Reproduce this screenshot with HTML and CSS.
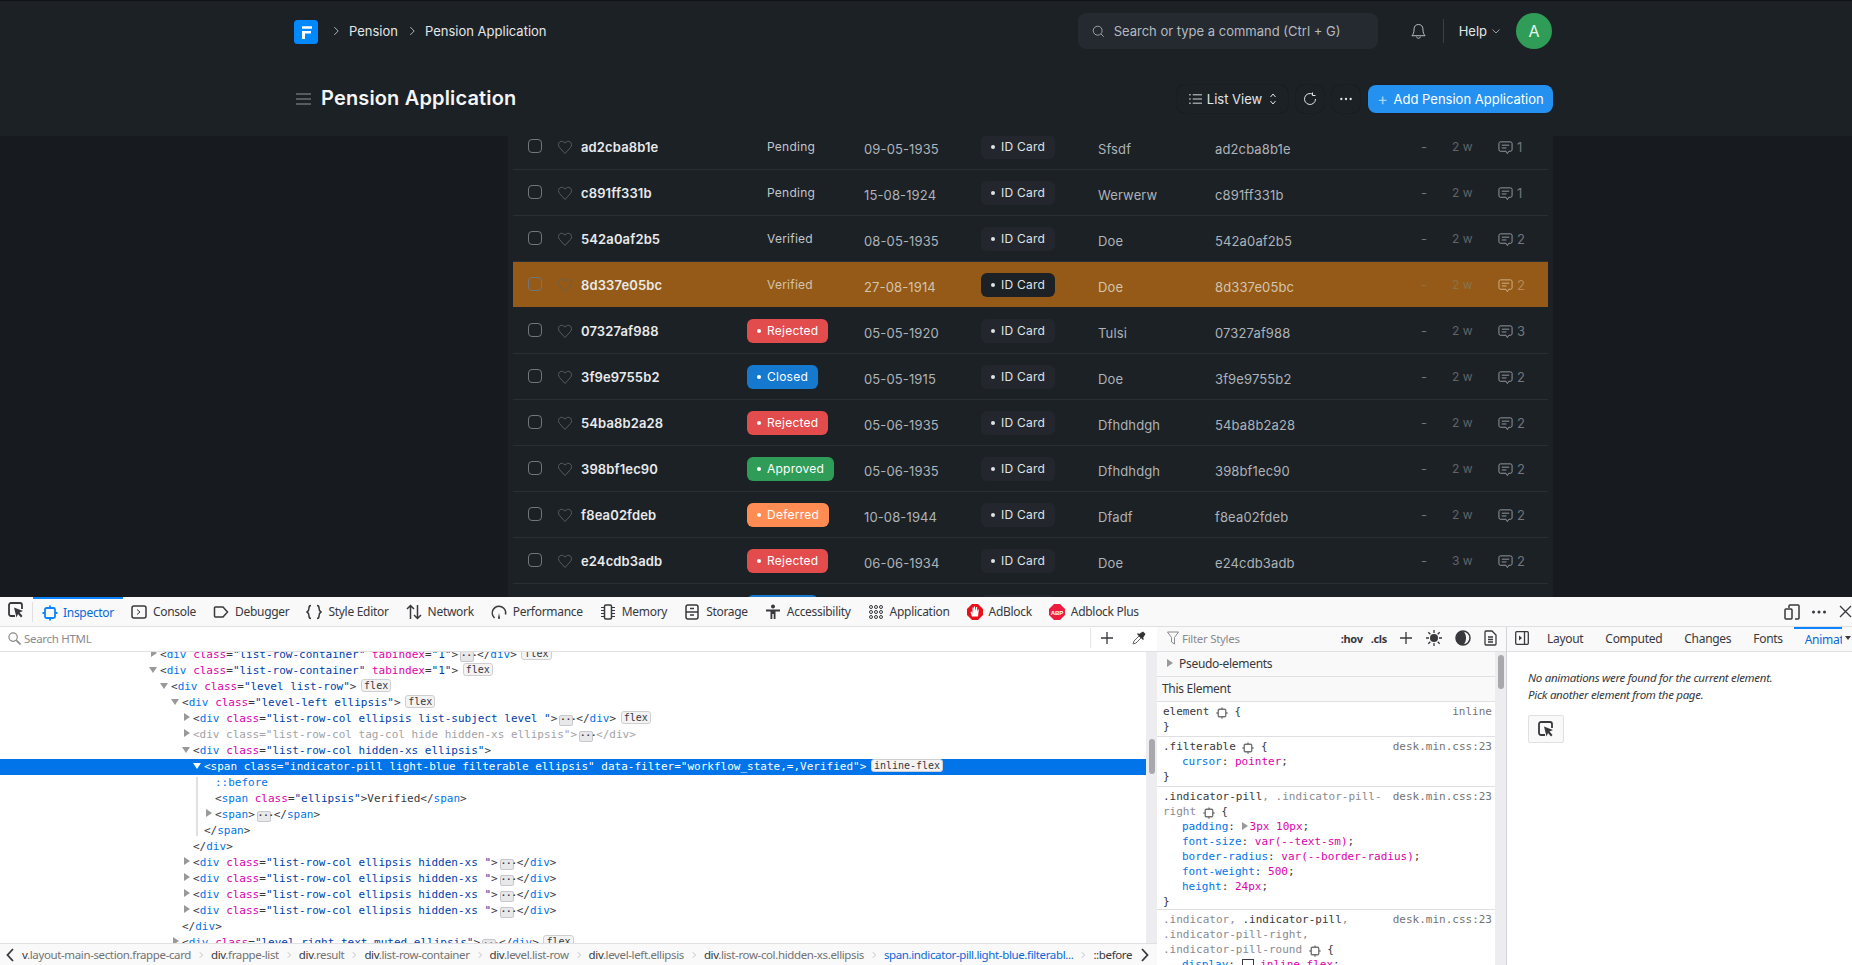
FILE: index.html
```html
<!doctype html>
<html lang="en">
    <head>
        <meta charset="UTF-8" />
        <meta name="viewport" content="width=device-width, initial-scale=1.0" />
        <title>Pension Application</title>
        <link rel="stylesheet" href="styles.css">
    </head>
    <body>
        <svg class="sprite" width="0" height="0">
            <symbol id="i-chevron" viewBox="0 0 16 16"><path d="M6 3.500 10.500 8 6 12.500" fill="none" stroke="currentColor"/></symbol>
            <symbol id="i-heart" viewBox="0 0 16 16"><path d="M8 14.500 2.600 8.600C1 6.800 1.100 4.200 2.800 2.900c1.700-1.200 3.900-.7 5.200 1.300 1.300-2 3.500-2.500 5.200-1.300 1.700 1.300 1.800 3.900.2 5.700Z" fill="none" stroke="currentColor"/></symbol>
            <symbol id="i-comment" viewBox="0 0 16 16"><path d="M2.500 2h11c.8 0 1.500.7 1.500 1.500v7c0 .8-.7 1.500-1.500 1.500h-2L10 14.500 8.500 12h-6c-.8 0-1.500-.7-1.500-1.500v-7C1 2.700 1.700 2 2.500 2ZM4 5.500h8M4 8.500h5" fill="none" stroke="currentColor"/></symbol>
            <symbol id="i-chip" viewBox="0 0 16 16"><path d="M4.500 3h7A1.500 1.500 0 0 1 13 4.500v7a1.500 1.500 0 0 1-1.500 1.500h-7A1.500 1.500 0 0 1 3 11.500v-7A1.500 1.500 0 0 1 4.500 3ZM8 .5V3M8 13v2.500M.5 8H3M13 8h2.500" fill="none" stroke="currentColor" stroke-width="1.800"/></symbol>
            <symbol id="i-pick" viewBox="0 0 16 16"><path d="M7 14H3a2 2 0 0 1-2-2V3a2 2 0 0 1 2-2h9a2 2 0 0 1 2 2v4" fill="none" stroke="currentColor" stroke-width="1.800"/><path d="m6 5.500 9 3.500-3.500 1.500 3 3.500-1.500 1.500-3-3.500-1.500 3.500Z" fill="currentColor"/></symbol>
        </svg>

        <div class="app">
            <header class="navbar">
                <svg class="logo" viewBox="0 0 24 24">
                    <rect width="24" height="24" rx="3.500" fill="#0089ff"/>
                    <path d="M8 6.300h10v2.500H8ZM8 11h9v2.500h-6V19H8Z" fill="#fff"/>
                </svg>
                <svg class="crumb-sep"><use href="#i-chevron"/></svg>
                <a class="crumb">Pension</a>
                <svg class="crumb-sep"><use href="#i-chevron"/></svg>
                <a class="crumb">Pension Application</a>
                <div class="search-box">
                    <svg class="search-icon" viewBox="0 0 16 16"><circle cx="7" cy="7" r="5.500" fill="none" stroke="currentColor"/><path d="m11 11 3.500 3.500" stroke="currentColor"/></svg>
                    <span>Search or type a command (Ctrl + G)</span>
                </div>
                <svg class="bell" viewBox="0 0 16 18"><path d="M8 1.500c-2.800 0-4.700 2-4.700 4.700 0 4.300-1.200 6-2.300 7.300h14c-1.100-1.300-2.300-3-2.300-7.300 0-2.700-1.900-4.700-4.700-4.700ZM6 14.500c.2 1.200 1 1.800 2 1.800s1.800-.6 2-1.800" fill="none" stroke="currentColor"/></svg>
                <span class="nav-divider"></span>
                <span class="help">Help</span>
                <svg class="help-caret" viewBox="0 0 8 5"><path d="m.5.5 3.500 3.500L7.500.5" fill="none" stroke="currentColor"/></svg>
                <span class="avatar">A</span>
            </header>

            <div class="page-head">
                <div class="hamburger"><i></i><i></i><i></i></div>
                <h1>Pension Application</h1>
                <button class="btn view-btn">
                    <svg viewBox="0 0 14 12"><path d="M4 1.500h10M4 6h10M4 10.500h10M0 1.500h2M0 6h2M0 10.500h2" stroke="currentColor" fill="none"/></svg>
                    List View
                    <svg class="updown" viewBox="0 0 6 12"><path d="m.5 4 2.500-3 2.500 3M.5 8l2.500 3 2.500-3" stroke="currentColor" fill="none"/></svg>
                </button>
                <button class="btn icon-btn">
                    <svg viewBox="0 0 14 14"><path d="M12.500 7A5.500 5.500 0 1 1 9.500 2.100M9.500.5v3h3" stroke="currentColor" fill="none"/></svg>
                </button>
                <button class="btn icon-btn">
                    <svg viewBox="0 0 12 4"><circle cx="2" cy="2" r="1" fill="currentColor"/><circle cx="6" cy="2" r="1" fill="currentColor"/><circle cx="10" cy="2" r="1" fill="currentColor"/></svg>
                </button>
                <button class="btn add-btn"><span class="plus">+</span> Add Pension Application</button>
            </div>

            <main class="list-card">
                <div class="list-row">
                    <span class="check"></span>
                    <svg class="heart"><use href="#i-heart"/></svg>
                    <span class="subject">ad2cba8b1e</span>
                    <span class="col"><span class="pill plain">Pending</span></span>
                    <span class="col date">09-05-1935</span>
                    <span class="col"><span class="pill dark">ID Card</span></span>
                    <span class="col date">Sfsdf</span>
                    <span class="col date">ad2cba8b1e</span>
                    <span class="dash">-</span><span class="age">2 w</span>
                    <svg class="comment"><use href="#i-comment"/></svg><span class="count">1</span>
                </div>
                <div class="list-row">
                    <span class="check"></span>
                    <svg class="heart"><use href="#i-heart"/></svg>
                    <span class="subject">c891ff331b</span>
                    <span class="col"><span class="pill plain">Pending</span></span>
                    <span class="col date">15-08-1924</span>
                    <span class="col"><span class="pill dark">ID Card</span></span>
                    <span class="col date">Werwerw</span>
                    <span class="col date">c891ff331b</span>
                    <span class="dash">-</span><span class="age">2 w</span>
                    <svg class="comment"><use href="#i-comment"/></svg><span class="count">1</span>
                </div>
                <div class="list-row">
                    <span class="check"></span>
                    <svg class="heart"><use href="#i-heart"/></svg>
                    <span class="subject">542a0af2b5</span>
                    <span class="col"><span class="pill plain">Verified</span></span>
                    <span class="col date">08-05-1935</span>
                    <span class="col"><span class="pill dark">ID Card</span></span>
                    <span class="col date">Doe</span>
                    <span class="col date">542a0af2b5</span>
                    <span class="dash">-</span><span class="age">2 w</span>
                    <svg class="comment"><use href="#i-comment"/></svg><span class="count">2</span>
                </div>
                <div class="list-row highlighted">
                    <span class="check"></span>
                    <svg class="heart"><use href="#i-heart"/></svg>
                    <span class="subject">8d337e05bc</span>
                    <span class="col"><span class="pill plain">Verified</span></span>
                    <span class="col date">27-08-1914</span>
                    <span class="col"><span class="pill dark">ID Card</span></span>
                    <span class="col date">Doe</span>
                    <span class="col date">8d337e05bc</span>
                    <span class="dash">-</span><span class="age">2 w</span>
                    <svg class="comment"><use href="#i-comment"/></svg><span class="count">2</span>
                </div>
                <div class="list-row">
                    <span class="check"></span>
                    <svg class="heart"><use href="#i-heart"/></svg>
                    <span class="subject">07327af988</span>
                    <span class="col"><span class="pill red">Rejected</span></span>
                    <span class="col date">05-05-1920</span>
                    <span class="col"><span class="pill dark">ID Card</span></span>
                    <span class="col date">Tulsi</span>
                    <span class="col date">07327af988</span>
                    <span class="dash">-</span><span class="age">2 w</span>
                    <svg class="comment"><use href="#i-comment"/></svg><span class="count">3</span>
                </div>
                <div class="list-row">
                    <span class="check"></span>
                    <svg class="heart"><use href="#i-heart"/></svg>
                    <span class="subject">3f9e9755b2</span>
                    <span class="col"><span class="pill blue">Closed</span></span>
                    <span class="col date">05-05-1915</span>
                    <span class="col"><span class="pill dark">ID Card</span></span>
                    <span class="col date">Doe</span>
                    <span class="col date">3f9e9755b2</span>
                    <span class="dash">-</span><span class="age">2 w</span>
                    <svg class="comment"><use href="#i-comment"/></svg><span class="count">2</span>
                </div>
                <div class="list-row">
                    <span class="check"></span>
                    <svg class="heart"><use href="#i-heart"/></svg>
                    <span class="subject">54ba8b2a28</span>
                    <span class="col"><span class="pill red">Rejected</span></span>
                    <span class="col date">05-06-1935</span>
                    <span class="col"><span class="pill dark">ID Card</span></span>
                    <span class="col date">Dfhdhdgh</span>
                    <span class="col date">54ba8b2a28</span>
                    <span class="dash">-</span><span class="age">2 w</span>
                    <svg class="comment"><use href="#i-comment"/></svg><span class="count">2</span>
                </div>
                <div class="list-row">
                    <span class="check"></span>
                    <svg class="heart"><use href="#i-heart"/></svg>
                    <span class="subject">398bf1ec90</span>
                    <span class="col"><span class="pill green">Approved</span></span>
                    <span class="col date">05-06-1935</span>
                    <span class="col"><span class="pill dark">ID Card</span></span>
                    <span class="col date">Dfhdhdgh</span>
                    <span class="col date">398bf1ec90</span>
                    <span class="dash">-</span><span class="age">2 w</span>
                    <svg class="comment"><use href="#i-comment"/></svg><span class="count">2</span>
                </div>
                <div class="list-row">
                    <span class="check"></span>
                    <svg class="heart"><use href="#i-heart"/></svg>
                    <span class="subject">f8ea02fdeb</span>
                    <span class="col"><span class="pill orange">Deferred</span></span>
                    <span class="col date">10-08-1944</span>
                    <span class="col"><span class="pill dark">ID Card</span></span>
                    <span class="col date">Dfadf</span>
                    <span class="col date">f8ea02fdeb</span>
                    <span class="dash">-</span><span class="age">2 w</span>
                    <svg class="comment"><use href="#i-comment"/></svg><span class="count">2</span>
                </div>
                <div class="list-row">
                    <span class="check"></span>
                    <svg class="heart"><use href="#i-heart"/></svg>
                    <span class="subject">e24cdb3adb</span>
                    <span class="col"><span class="pill red">Rejected</span></span>
                    <span class="col date">06-06-1934</span>
                    <span class="col"><span class="pill dark">ID Card</span></span>
                    <span class="col date">Doe</span>
                    <span class="col date">e24cdb3adb</span>
                    <span class="dash">-</span><span class="age">3 w</span>
                    <svg class="comment"><use href="#i-comment"/></svg><span class="count">2</span>
                </div>
                <div class="list-row">
                    <span class="check"></span>
                    <svg class="heart"><use href="#i-heart"/></svg>
                    <span class="subject"></span>
                    <span class="col"><span class="pill blue">Closed</span></span>
                    <span class="col date"></span>
                    <span class="col"><span class="pill dark">ID Card</span></span>
                </div>
            </main>
        </div>

        <section class="devtools">
            <nav class="dt-toolbar">
                <span class="dt-pick"><svg class="ti"><use href="#i-pick"/></svg></span>
                <a class="dt-tab active">
                    <svg class="ti"><use href="#i-chip"/></svg>Inspector
                </a>
                <a class="dt-tab">
                    <svg class="ti" viewBox="0 0 16 16"><rect x="1" y="2" width="14" height="12" rx="2" fill="none" stroke="currentColor" stroke-width="1.500"/><path d="m6 5.500 3 2.500-3 2.500" fill="none" stroke="currentColor"/></svg>Console
                </a>
                <a class="dt-tab">
                    <svg class="ti" viewBox="0 0 16 16"><path d="M2.500 3h7.500l4.500 5-4.500 5H2.500a1 1 0 0 1-1-1V4a1 1 0 0 1 1-1Z" fill="none" stroke="currentColor" stroke-width="1.500"/></svg>Debugger
                </a>
                <a class="dt-tab">
                    <svg class="ti" viewBox="0 0 16 16"><path d="M5 1.500c-2 0-2 1-2 2.500s0 3-2 4c2 1 2 2.500 2 4s0 2.500 2 2.500M11 1.500c2 0 2 1 2 2.500s0 3 2 4c-2 1-2 2.500-2 4s0 2.500-2 2.500" fill="none" stroke="currentColor" stroke-width="1.500"/></svg>Style Editor
                </a>
                <a class="dt-tab">
                    <svg class="ti" viewBox="0 0 16 16"><path d="M4.500 15V2M1 5l3.500-3.500L8 5M11.500 1v13M8 11l3.500 3.500L15 11" fill="none" stroke="currentColor" stroke-width="1.500"/></svg>Network
                </a>
                <a class="dt-tab">
                    <svg class="ti" viewBox="0 0 16 16"><path d="M3.500 14A6.700 6.700 0 1 1 14.500 10.500" fill="none" stroke="currentColor" stroke-width="1.600"/><path d="m7 14 1-5 1 5a1 1 0 0 1-2 0Z" fill="currentColor"/></svg>Performance
                </a>
                <a class="dt-tab">
                    <svg class="ti" viewBox="0 0 16 16"><rect x="4.500" y="1" width="7" height="14" rx="1.500" fill="none" stroke="currentColor" stroke-width="1.500"/><path d="M1 3.500h3M1 6.500h3M1 9.500h3M1 12.500h3M12 3.500h3M12 6.500h3M12 9.500h3M12 12.500h3" stroke="currentColor"/></svg>Memory
                </a>
                <a class="dt-tab">
                    <svg class="ti" viewBox="0 0 16 16"><rect x="2" y="1" width="12" height="14" rx="2" fill="none" stroke="currentColor" stroke-width="1.500"/><path d="M2 8h12M6 4.500h4M6 11h4" stroke="currentColor" stroke-width="1.300"/></svg>Storage
                </a>
                <a class="dt-tab">
                    <svg class="ti" viewBox="0 0 16 16"><circle cx="8" cy="2.500" r="2" fill="currentColor"/><path d="M1 5.500h14V7.500h-4.500V15H8.700v-5H7.300v5H5.500V7.500H1Z" fill="currentColor"/></svg>Accessibility
                </a>
                <a class="dt-tab">
                    <svg class="ti" viewBox="0 0 16 16" fill="none" stroke="currentColor"><circle cx="3" cy="3" r="1.500"/><circle cx="8" cy="3" r="1.500"/><circle cx="13" cy="3" r="1.500"/><circle cx="3" cy="8" r="1.500"/><circle cx="8" cy="8" r="1.500"/><circle cx="13" cy="8" r="1.500"/><circle cx="3" cy="13" r="1.500"/><circle cx="8" cy="13" r="1.500"/><circle cx="13" cy="13" r="1.500"/></svg>Application
                </a>
                <a class="dt-tab">
                    <svg class="ti" viewBox="0 0 16 16"><path d="M5 0h6l5 5v6l-5 5H5l-5-5V5Z" fill="#e8101a"/><path d="M5 12.500 3.500 8l1-.5 1 1.500V3.500h1V7l.5-4.500h1L8.500 7l.7-4h1L10 7.500l.8-2h1L11 12.500Z" fill="#fff"/></svg>AdBlock
                </a>
                <a class="dt-tab">
                    <svg class="ti" viewBox="0 0 16 16"><path d="M5 0h6l5 5v6l-5 5H5l-5-5V5Z" fill="#ed1c3e"/><text x="8" y="10.500" text-anchor="middle" class="abp">ABP</text></svg>Adblock Plus
                </a>
                <span class="dt-spacer"></span>
                <svg class="ti dock" viewBox="0 0 16 16"><path d="M5 4V2a1 1 0 0 1 1-1h8a1 1 0 0 1 1 1v12a1 1 0 0 1-1 1h-3" fill="none" stroke="currentColor" stroke-width="1.500"/><rect x="1" y="5" width="7" height="10" rx="1" fill="none" stroke="currentColor" stroke-width="1.500"/></svg>
                <svg class="ti dots" viewBox="0 0 16 4"><circle cx="2.500" cy="2" r="1.500" fill="currentColor"/><circle cx="8" cy="2" r="1.500" fill="currentColor"/><circle cx="13.500" cy="2" r="1.500" fill="currentColor"/></svg>
                <svg class="ti close" viewBox="0 0 13 13"><path d="m1 1 11 11M12 1 1 12" stroke="currentColor" stroke-width="1.300"/></svg>
            </nav>

            <div class="dt-panes">
                <div class="markup-pane">
                    <div class="pane-bar">
                        <svg class="search-html" viewBox="0 0 14 14"><circle cx="5.500" cy="5.500" r="4.500" fill="none" stroke="currentColor" stroke-width="1.300"/><path d="m9 9 4.500 4.500" stroke="currentColor" stroke-width="1.800"/></svg>
                        <span class="placeholder">Search HTML</span>
                        <span class="dt-spacer"></span>
                        <span class="bar-sep"></span>
                        <svg class="bar-plus" viewBox="0 0 12 12"><path d="M6 0v12M0 6h12" stroke="currentColor" stroke-width="1.300"/></svg>
                        <svg class="dropper" viewBox="0 0 14 14"><path d="m1 13 1-3 5-5 2 2-5 5Z" fill="none" stroke="#666"/><path d="M7 3 11 0.500 13.500 3 11 7l1 1-1 1-6-6 1-1Z" fill="#333"/></svg>
                    </div>
                    <div class="markup-body">
                        <div class="markup">
                            <div class="line d0 clip-first"><i class="tw shut"></i><b>&lt;</b><u>div</u> <s>class</s>=<em>"list-row-container"</em> <s>tabindex</s>=<em>"1"</em><b>&gt;</b><span class="more">···</span><b>&lt;/</b><u>div</u><b>&gt;</b> <span class="badge">flex</span></div>
                            <div class="line d0"><i class="tw open"></i><b>&lt;</b><u>div</u> <s>class</s>=<em>"list-row-container"</em> <s>tabindex</s>=<em>"1"</em><b>&gt;</b> <span class="badge">flex</span></div>
                            <div class="line d1"><i class="tw open"></i><b>&lt;</b><u>div</u> <s>class</s>=<em>"level list-row"</em><b>&gt;</b> <span class="badge">flex</span></div>
                            <div class="line d2"><i class="tw open"></i><b>&lt;</b><u>div</u> <s>class</s>=<em>"level-left ellipsis"</em><b>&gt;</b> <span class="badge">flex</span></div>
                            <div class="line d3"><i class="tw shut"></i><b>&lt;</b><u>div</u> <s>class</s>=<em>"list-row-col ellipsis list-subject level "</em><b>&gt;</b><span class="more">···</span><b>&lt;/</b><u>div</u><b>&gt;</b> <span class="badge">flex</span></div>
                            <div class="line d3 muted"><i class="tw shut"></i>&lt;div class="list-row-col tag-col hide hidden-xs ellipsis"&gt;<span class="more">···</span>&lt;/div&gt;</div>
                            <div class="line d3"><i class="tw open"></i><b>&lt;</b><u>div</u> <s>class</s>=<em>"list-row-col hidden-xs ellipsis"</em><b>&gt;</b></div>
                            <div class="line d4 selected"><i class="tw open"></i>&lt;span class="indicator-pill light-blue filterable ellipsis" data-filter="workflow_state,=,Verified"&gt; <span class="badge">inline-flex</span></div>
                            <div class="guided">
                                <div class="line d5"><u>::before</u></div>
                                <div class="line d5"><b>&lt;</b><u>span</u> <s>class</s>=<em>"ellipsis"</em><b>&gt;</b>Verified<b>&lt;/</b><u>span</u><b>&gt;</b></div>
                                <div class="line d5"><i class="tw shut"></i><b>&lt;</b><u>span</u><b>&gt;</b><span class="more">···</span><b>&lt;/</b><u>span</u><b>&gt;</b></div>
                                <div class="line d4"><b>&lt;/</b><u>span</u><b>&gt;</b></div>
                            </div>
                            <div class="line d3"><b>&lt;/</b><u>div</u><b>&gt;</b></div>
                            <div class="line d3"><i class="tw shut"></i><b>&lt;</b><u>div</u> <s>class</s>=<em>"list-row-col ellipsis hidden-xs "</em><b>&gt;</b><span class="more">···</span><b>&lt;/</b><u>div</u><b>&gt;</b></div>
                            <div class="line d3"><i class="tw shut"></i><b>&lt;</b><u>div</u> <s>class</s>=<em>"list-row-col ellipsis hidden-xs "</em><b>&gt;</b><span class="more">···</span><b>&lt;/</b><u>div</u><b>&gt;</b></div>
                            <div class="line d3"><i class="tw shut"></i><b>&lt;</b><u>div</u> <s>class</s>=<em>"list-row-col ellipsis hidden-xs "</em><b>&gt;</b><span class="more">···</span><b>&lt;/</b><u>div</u><b>&gt;</b></div>
                            <div class="line d3"><i class="tw shut"></i><b>&lt;</b><u>div</u> <s>class</s>=<em>"list-row-col ellipsis hidden-xs "</em><b>&gt;</b><span class="more">···</span><b>&lt;/</b><u>div</u><b>&gt;</b></div>
                            <div class="line d2"><b>&lt;/</b><u>div</u><b>&gt;</b></div>
                            <div class="line d2"><i class="tw shut"></i><b>&lt;</b><u>div</u> <s>class</s>=<em>"level-right text-muted ellipsis"</em><b>&gt;</b><span class="more">···</span><b>&lt;/</b><u>div</u><b>&gt;</b> <span class="badge">flex</span></div>
                        </div>
                        <div class="vscroll markup-scroll"><i></i></div>
                    </div>
                    <div class="breadcrumbs">
                        <svg class="bc-arrow" viewBox="0 0 8 14"><path d="M7 1 1.500 7 7 13" fill="none" stroke="currentColor" stroke-width="1.800"/></svg>
                        <span class="bc-items">
                            <span><i>v</i>.layout-main-section.frappe-card</span><svg class="bc-sep"><use href="#i-chevron"/></svg>
                            <span><i>div</i>.frappe-list</span><svg class="bc-sep"><use href="#i-chevron"/></svg>
                            <span><i>div</i>.result</span><svg class="bc-sep"><use href="#i-chevron"/></svg>
                            <span><i>div</i>.list-row-container</span><svg class="bc-sep"><use href="#i-chevron"/></svg>
                            <span><i>div</i>.level.list-row</span><svg class="bc-sep"><use href="#i-chevron"/></svg>
                            <span><i>div</i>.level-left.ellipsis</span><svg class="bc-sep"><use href="#i-chevron"/></svg>
                            <span><i>div</i>.list-row-col.hidden-xs.ellipsis</span><svg class="bc-sep"><use href="#i-chevron"/></svg>
                            <span class="bc-current">span.indicator-pill.light-blue.filterabl...</span><svg class="bc-sep"><use href="#i-chevron"/></svg>
                            <span><i>::before</i></span>
                        </span>
                        <svg class="bc-arrow" viewBox="0 0 8 14"><path d="M1 1l5.500 6L1 13" fill="none" stroke="currentColor" stroke-width="1.800"/></svg>
                    </div>
                </div>

                <div class="rules-pane">
                    <div class="pane-bar">
                        <svg class="funnel" viewBox="0 0 12 14"><path d="M.5 1h11L7.500 6.500V13l-3-2V6.500Z" fill="none" stroke="currentColor"/></svg>
                        <span class="placeholder">Filter Styles</span>
                        <span class="dt-spacer"></span>
                        <span class="rule-tool">:hov</span>
                        <span class="rule-tool">.cls</span>
                        <svg class="bar-plus" viewBox="0 0 12 12"><path d="M6 0v12M0 6h12" stroke="currentColor" stroke-width="1.300"/></svg>
                        <svg class="sun" viewBox="0 0 16 16"><circle cx="8" cy="8" r="4" fill="currentColor"/><path d="M8 0v3M8 13v3M0 8h3M13 8h3M2.300 2.300l2 2M11.700 11.700l2 2M2.300 13.700l2-2M11.700 4.300l2-2" stroke="currentColor" stroke-width="1.300"/></svg>
                        <svg class="moon" viewBox="0 0 16 16"><circle cx="8" cy="8" r="7" fill="none" stroke="currentColor" stroke-width="1.500"/><path d="M8 1a7 7 0 0 1 0 14c-2-1.500-3-4-3-7s1-5.500 3-7Z" fill="currentColor" transform="matrix(-1 0 0 1 16 0)"/></svg>
                        <svg class="doc" viewBox="0 0 13 16"><path d="M2 1h6l4 4v9a1 1 0 0 1-1 1H2a1 1 0 0 1-1-1V2a1 1 0 0 1 1-1ZM4 7h5M4 9.500h5M4 12h5" fill="none" stroke="currentColor" stroke-width="1.300"/></svg>
                    </div>
                    <div class="rules-body">
                        <div class="rules">
                            <div class="rule-head"><i class="tw shut"></i>Pseudo-elements</div>
                            <div class="rule-head this">This Element</div>
                            <div class="rule">
                                <span class="source">inline</span>
                                <div>element <svg class="gear"><use href="#i-chip"/></svg> {</div>
                                <div>}</div>
                            </div>
                            <div class="rule">
                                <span class="source">desk.min.css:23</span>
                                <div>.filterable <svg class="gear"><use href="#i-chip"/></svg> {</div>
                                <div class="decl"><u>cursor</u>: <s>pointer</s>;</div>
                                <div>}</div>
                            </div>
                            <div class="rule long">
                                <span class="source">desk.min.css:23</span>
                                <div><strong>.indicator-pill</strong><span class="dim">, .indicator-pill-<br>right</span> <svg class="gear"><use href="#i-chip"/></svg> {</div>
                                <div class="decl"><u>padding</u>: <i class="tw shut"></i><s>3px 10px</s>;</div>
                                <div class="decl"><u>font-size</u>: <s>var(--text-sm)</s>;</div>
                                <div class="decl"><u>border-radius</u>: <s>var(--border-radius)</s>;</div>
                                <div class="decl"><u>font-weight</u>: <s>500</s>;</div>
                                <div class="decl"><u>height</u>: <s>24px</s>;</div>
                                <div>}</div>
                            </div>
                            <div class="rule">
                                <span class="source">desk.min.css:23</span>
                                <div><span class="dim">.indicator, </span><strong>.indicator-pill</strong><span class="dim">,<br>.indicator-pill-right,<br>.indicator-pill-round</span> <svg class="gear"><use href="#i-chip"/></svg> {</div>
                                <div class="decl"><u>display</u>: <i class="flex-mark"></i> <s>inline-flex</s>;</div>
                            </div>
                        </div>
                        <div class="vscroll rules-scroll"><i></i></div>
                    </div>
                </div>

                <div class="side-pane">
                    <div class="pane-bar side-tabs">
                        <svg class="side-toggle" viewBox="0 0 14 14"><rect x=".7" y=".7" width="12.600" height="12.600" rx="1" fill="none" stroke="currentColor" stroke-width="1.300"/><path d="M9.500 1v12" stroke="currentColor" stroke-width="1.300"/><path d="m4 4.500 3 2.500-3 2.500Z" fill="currentColor"/></svg>
                        <a>Layout</a>
                        <a>Computed</a>
                        <a>Changes</a>
                        <a>Fonts</a>
                        <a class="active">Animat</a>
                        <i class="tab-more"></i>
                    </div>
                    <div class="side-body">
                        <p>No animations were found for the current element.<br>Pick another element from the page.</p>
                        <button class="pick-btn"><svg class="ti"><use href="#i-pick"/></svg></button>
                    </div>
                </div>
            </div>
        </section>
    </body>
</html>
```

FILE: styles.css
```css
* {
    box-sizing: border-box;
}
body {
    margin: 0;
    height: 965px;
    overflow: hidden;
    background-color: #fff;
    font-family: Inter, sans-serif;
}
.sprite {
    position: absolute;
}

/* frappe desk */
.app {
    height: 597px;
    overflow: hidden;
    background-color: #171a1f;
    color: #c0c6cc;
    font-size: 13px;
}
.navbar {
    height: 62px;
    padding: 12px 300px 0 294px;
    display: flex;
    align-items: flex-start;
    background-color: #1c2126;
    border-top: 1px solid #101215;
    position: relative;
    z-index: 1;
}
.navbar > * {
    flex: none;
}
.logo {
    width: 24px;
    height: 24px;
    margin-top: 7px;
    margin-right: 4px;
}
.crumb-sep {
    width: 14px;
    height: 14px;
    margin: 11px 6px 0 7px;
    color: #c0c6cc;
}
.crumb {
    line-height: 36px;
    color: #e2e6e9;
}
.search-box {
    width: 300px;
    height: 36px;
    margin-left: auto;
    padding-left: 14px;
    display: flex;
    align-items: center;
    background-color: #252a30;
    border-radius: 8px;
    color: #b4bac0;
}
.search-icon {
    width: 13px;
    height: 13px;
    margin-right: 9px;
}
.bell {
    width: 15px;
    height: 17px;
    margin: 10px 0 0 33px;
    color: #c0c6cc;
}
.nav-divider {
    width: 1px;
    height: 24px;
    margin: 6px 0 0 17px;
    background-color: #3a4048;
}
.help {
    margin-left: 15px;
    line-height: 36px;
    color: #e2e6e9;
}
.help-caret {
    width: 8px;
    height: 5px;
    margin: 16px 0 0 5px;
    color: #9aa0a6;
}
.avatar {
    width: 36px;
    height: 36px;
    margin-left: 16px;
    border-radius: 50%;
    background-color: #2f9d58;
    color: #e6f5ec;
    font-size: 16px;
    line-height: 36px;
    text-align: center;
}

.page-head {
    height: 74px;
    padding-left: 296px;
    display: flex;
    align-items: center;
    background-color: #1c2126;
    position: relative;
    z-index: 1;
}
.hamburger {
    width: 15px;
    margin-right: 10px;
}
.hamburger i {
    display: block;
    height: 2px;
    margin: 3px 0;
    background-color: #555b63;
}
h1 {
    width: 856px;
    margin: -2px 0 0;
    font-size: 20px;
    font-weight: 600;
    letter-spacing: 0.15px;
    color: #f4f5f6;
}
.btn {
    height: 28px;
    display: flex;
    align-items: center;
    justify-content: center;
    border: 0;
    border-radius: 8px;
    background-color: #1c2126;
    color: #e2e6e9;
    font: inherit;
    box-shadow: 0 0 1px #101215;
}
.view-btn {
    width: 111px;
}
.view-btn svg {
    width: 13px;
    height: 12px;
    margin-right: 5px;
}
.view-btn .updown {
    width: 6px;
    margin: 0 0 0 8px;
}
.icon-btn {
    width: 28px;
    margin-left: 8px;
}
.icon-btn svg {
    width: 14px;
    height: 14px;
}
.add-btn {
    width: 185px;
    margin-left: 8px;
    background-color: #2490ef;
    color: #fff;
    white-space: pre;
}
.plus {
    margin-right: 2px;
    font-size: 16px;
    line-height: 1;
    color: #a8d4fa;
}

.list-card {
    width: 1045px;
    height: 480px;
    margin: -12px 0 0 508px;
    padding: 0 5px;
    background-color: #1c2126;
}
.list-row {
    height: 46px;
    padding-left: 15px;
    display: flex;
    align-items: center;
    border-bottom: 1px solid #2a2f35;
}
.check {
    width: 14px;
    height: 14px;
    flex: none;
    margin-top: -1px;
    border: 1px solid #70767d;
    border-radius: 4px;
}
.heart {
    width: 16px;
    height: 16px;
    flex: none;
    margin-left: 14.500px;
    color: #555b63;
}
.subject {
    width: 166px;
    flex: none;
    margin-left: 8.500px;
    font-weight: 600;
    letter-spacing: 0.01em;
    color: #e8eaec;
}
.col {
    width: 117px;
    flex: none;
    white-space: nowrap;
}
.date {
    padding-top: 4px;
    letter-spacing: 0.01em;
    color: #adb3b9;
}
.pill {
    height: 24px;
    padding: 0 10px;
    display: inline-flex;
    align-items: center;
    border-radius: 6px;
    font-size: 12px;
    font-weight: 400;
    letter-spacing: 0.02em;
    color: #fff;
}
.pill::before {
    content: "";
    width: 4px;
    height: 4px;
    margin-right: 6px;
    border-radius: 50%;
    background-color: currentColor;
}
.pill.plain {
    color: #c0c6cc;
}
.pill.plain::before {
    background-color: transparent;
}
.red {
    background-color: #e24c4c;
}
.blue {
    background-color: #1579d0;
}
.green {
    background-color: #2f9d58;
}
.orange {
    background-color: #ff8c52;
}
.pill.dark {
    background-color: #23272d;
    color: #dfe3e6;
}
.dash {
    width: 31px;
    margin-left: 89px;
    color: #70767d;
}
.age {
    width: 46px;
    font-size: 12px;
    color: #5f656c;
}
.comment {
    width: 15px;
    height: 15px;
    margin-top: 2px;
    color: #9aa0a6;
}
.count {
    margin-left: 4px;
    font-size: 13px;
    color: #70767d;
}
.highlighted {
    height: 45px;
    margin-bottom: 1px;
    border-bottom: 0;
    background-color: #955a17;
}
.highlighted .pill.dark {
    background-color: #1c2126;
}
.highlighted .date,
.highlighted .pill.plain {
    color: #d2c4ae;
}
.highlighted .heart {
    color: #6c6148;
}
.highlighted .age,
.highlighted .dash {
    color: #8a7349;
}
.highlighted .comment {
    color: #d2b58f;
}
.highlighted .count {
    color: #b5895a;
}

/* firefox devtools */
.devtools {
    height: 368px;
    display: flex;
    flex-direction: column;
    background-color: #fff;
    color: #38383d;
    font-family: "Noto Sans", sans-serif;
    font-size: 12px;
    letter-spacing: -0.3px;
}
.dt-toolbar {
    height: 30px;
    display: flex;
    align-items: center;
    flex: none;
    background-color: #f9f9fa;
    border-bottom: 1px solid #e0e0e2;
}
.ti {
    width: 16px;
    height: 16px;
    flex: none;
    color: #38383d;
}
.dt-pick {
    width: 33px;
    height: 20px;
    padding-left: 8px;
    border-right: 1px solid #e0e0e2;
}
.dt-tab {
    height: 29px;
    padding: 0 9px 0 8px;
    display: flex;
    align-items: center;
    gap: 6px;
    white-space: nowrap;
}
.dt-tab.active {
    padding-left: 9px;
    gap: 5px;
    border-top: 2px solid #0a84ff;
    color: #0a68d8;
}
.dt-tab.active .ti {
    color: #0a84ff;
}
.abp {
    font-family: "Liberation Sans", sans-serif;
    font-size: 6px;
    font-weight: 700;
    letter-spacing: 0;
    fill: #fff;
}
.dt-spacer {
    flex: 1;
}
.dots {
    height: 4px;
    margin: 0 12px 0 11px;
}
.close {
    width: 13px;
    height: 13px;
}
.dt-panes {
    flex: 1;
    min-height: 0;
    display: flex;
}
.pane-bar {
    height: 25px;
    padding: 0 8px 2px;
    display: flex;
    align-items: center;
    flex: none;
    background-color: #f9f9fa;
    border-bottom: 1px solid #e0e0e2;
}
.placeholder {
    color: #8a8a8f;
    font-size: 11.500px;
}
.markup-pane {
    width: 1157px;
    display: flex;
    flex-direction: column;
    background-color: #fff;
}
.markup-pane .pane-bar {
    background-color: #fff;
}
.search-html {
    width: 13px;
    height: 13px;
    margin-right: 3px;
    color: #8a8a8f;
}
.bar-sep {
    width: 1px;
    height: 20px;
    margin-right: 10px;
    background-color: #e6e6e8;
}
.bar-plus {
    width: 12px;
    height: 12px;
    color: #38383d;
}
.dropper {
    width: 14px;
    height: 14px;
    margin: 0 3px 0 19px;
}
.markup-body {
    flex: 1;
    min-height: 0;
    display: flex;
}
.markup {
    flex: 1;
    overflow: hidden;
    font-family: "DejaVu Sans Mono", monospace;
    font-size: 11px;
    line-height: 16px;
    letter-spacing: 0;
    color: #38383d;
}
.line {
    height: 16px;
    white-space: nowrap;
}
.line b {
    font-weight: 400;
    color: #38383d;
}
.line u,
.rule u {
    color: #0074e8;
    text-decoration: none;
}
.line s {
    color: #dd00a9;
    text-decoration: none;
}
.line em {
    font-style: normal;
    color: #003eaa;
}
.clip-first {
    margin-top: -5px;
}
.d0 {
    padding-left: 160px;
}
.d1 {
    padding-left: 171px;
}
.d2 {
    padding-left: 182px;
}
.d3 {
    padding-left: 193px;
}
.d4 {
    padding-left: 204px;
}
.d5 {
    padding-left: 215px;
}
.tw {
    display: inline-block;
    width: 0;
    height: 0;
    vertical-align: 1px;
}
.tw.shut {
    border-left: 6px solid #999;
    border-top: 4px solid transparent;
    border-bottom: 4px solid transparent;
    margin-right: 4px;
}
.tw.open {
    border-top: 6px solid #999;
    border-left: 4px solid transparent;
    border-right: 4px solid transparent;
}
.line .tw.shut {
    margin-left: -9px;
    margin-right: 3px;
}
.line .tw.open {
    margin-left: -11px;
    margin-right: 3px;
}
.muted {
    color: #a2a2a6;
}
.selected {
    background-color: #0074e8;
    color: #fff;
}
.selected .tw.open {
    border-top-color: #fff;
}
.guided {
    position: relative;
}
.guided::before {
    content: "";
    position: absolute;
    left: 196px;
    top: 2px;
    bottom: 3px;
    width: 2px;
    background-color: #e0e0e2;
}
.more {
    display: inline-block;
    width: 14px;
    height: 11px;
    margin: 0 3px 0 2px;
    background-color: #e8e8ea;
    border: 1px solid #c8c8cc;
    border-radius: 2px;
    font-size: 9px;
    font-weight: 700;
    line-height: 7px;
    text-align: center;
    color: #38383d;
    vertical-align: 0;
}
.badge {
    display: inline-block;
    padding: 0 2px;
    margin-left: -2px;
    background-color: #f3f3f4;
    border: 1px solid #cfcfd2;
    border-radius: 3px;
    font-size: 10px;
    line-height: 11px;
    color: #38383d;
    vertical-align: 1px;
}
.vscroll {
    flex: none;
    padding-left: 3px;
    background-color: #ededf0;
}
.vscroll i {
    display: block;
    width: 6px;
    border-radius: 3px;
    background-color: #a9a9ad;
}
.markup-scroll {
    width: 11px;
}
.markup-scroll i {
    height: 35px;
    margin-top: 87px;
}
.rules-scroll {
    width: 11px;
}
.rules-scroll i {
    height: 34px;
    margin-top: 3px;
}
.breadcrumbs {
    height: 22px;
    flex: none;
    padding: 0 8px 0 6px;
    display: flex;
    align-items: center;
    border-top: 1px solid #e0e0e2;
    background-color: #f9f9fa;
    color: #737373;
    font-size: 11.500px;
    letter-spacing: -0.37px;
}
.bc-arrow {
    width: 8px;
    height: 14px;
    flex: none;
    color: #38383d;
}
.bc-items {
    flex: 1;
    min-width: 0;
    margin-left: 8px;
    display: flex;
    align-items: center;
    gap: 5px;
    overflow: hidden;
    white-space: nowrap;
}
.bc-items i {
    font-style: normal;
    color: #38383d;
}
.bc-sep {
    width: 10px;
    height: 10px;
    flex: none;
    color: #a2a2a6;
}
.bc-current {
    color: #0a68d8;
}
.rules-pane {
    width: 350px;
    display: flex;
    flex-direction: column;
    border-right: 1px solid #d4d4d8;
}
.funnel {
    width: 12px;
    height: 14px;
    margin: 0 3px 0 2px;
    color: #8a8a8f;
}
.rule-tool {
    margin-right: 8px;
    font-size: 11px;
    font-weight: 700;
}
.rules-pane .bar-plus {
    margin: 0 14px 0 5px;
}
.sun,
.moon,
.doc {
    width: 16px;
    height: 16px;
    margin-right: 13px;
}
.doc {
    width: 13px;
    margin-right: 1px;
}
.rules-body {
    flex: 1;
    min-height: 0;
    display: flex;
}
.rules {
    flex: 1;
    overflow: hidden;
    font-family: "DejaVu Sans Mono", monospace;
    font-size: 11px;
    line-height: 15px;
    letter-spacing: 0;
    color: #38383d;
}
.rule-head {
    height: 25px;
    padding: 0 0 2px 10px;
    display: flex;
    align-items: center;
    background-color: #f9f9fa;
    border-bottom: 1px solid #e0e0e2;
    font-family: "Noto Sans", sans-serif;
    font-size: 12px;
    letter-spacing: -0.3px;
}
.rule-head .tw {
    margin-right: 6px;
}
.rule-head.this {
    padding-left: 5px;
}
.rule {
    padding: 2px 3px 2px 6px;
    border-bottom: 1px solid #e0e0e2;
}
.rule.long {
    padding-bottom: 0;
}
.source {
    float: right;
    color: #737373;
}
.decl {
    height: 15px;
    padding-left: 19px;
}
.decl .tw {
    margin-right: 2px;
    vertical-align: 0;
}
.flex-mark {
    display: inline-block;
    width: 12px;
    height: 9px;
    border: 1px solid #38383d;
    vertical-align: 0;
}
.rule s {
    color: #dd00a9;
    text-decoration: none;
}
.rule strong {
    font-weight: 400;
    color: #38383d;
}
.dim {
    color: #8a8a8f;
}
.gear {
    width: 12px;
    height: 12px;
    margin: -3px 0;
    vertical-align: -1px;
    color: #737373;
}
.side-pane {
    flex: 1;
    min-width: 0;
    display: flex;
    flex-direction: column;
}
.side-tabs {
    gap: 22px;
    white-space: nowrap;
    overflow: hidden;
}
.side-toggle {
    width: 14px;
    height: 14px;
    flex: none;
    margin-right: -4px;
}
.side-tabs .active {
    margin-left: -11px;
    padding-left: 11px;
    width: 48px;
    height: 24px;
    flex: none;
    overflow: hidden;
    line-height: 22px;
    border-top: 2px solid #0a84ff;
    color: #0a68d8;
    align-self: flex-start;
}
.tab-more {
    width: 0;
    height: 0;
    flex: none;
    margin-left: -19px;
    border-top: 4px solid #38383d;
    border-left: 3px solid transparent;
    border-right: 3px solid transparent;
}
.side-body {
    padding: 17px 21px;
}
.side-body p {
    margin: 0 0 12px;
    font-style: italic;
    font-size: 11.500px;
    line-height: 17px;
}
.pick-btn {
    width: 36px;
    height: 28px;
    display: flex;
    align-items: center;
    justify-content: center;
    background-color: #f9f9fa;
    border: 1px solid #e0e0e2;
    border-radius: 2px;
}
```
